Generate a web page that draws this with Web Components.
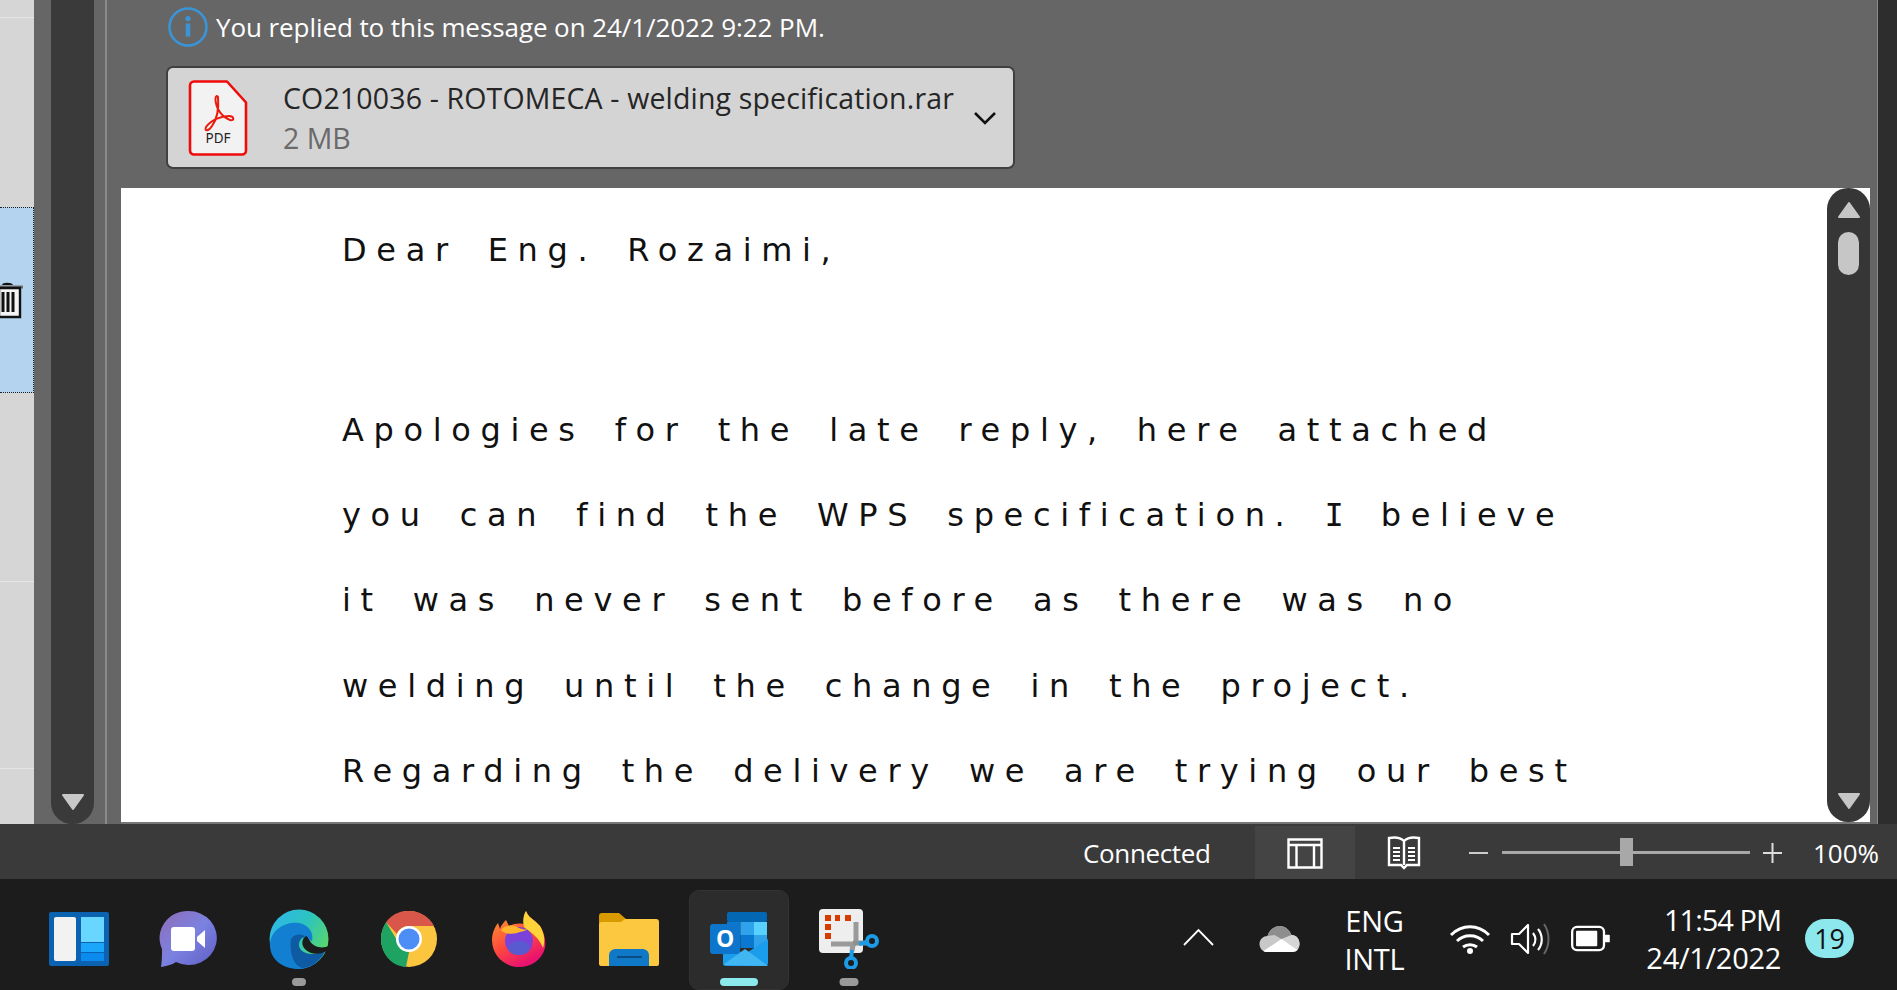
<!DOCTYPE html>
<html>
<head>
<meta charset="utf-8">
<style>
  html, body { margin: 0; height: 100%; overflow: hidden; background: #666; }
  body { font-family: "Open Sans", "Noto Sans", sans-serif; }
</style>
</head>
<body>
<app-screen>
  <reading-pane>
    <message-header slot="header"></message-header>
    <mail-body>
      <p>Dear Eng. Rozaimi,</p>
      <p class="gap"></p>
      <p>Apologies for the late reply, here attached</p>
      <p>you can find the WPS specification. <span style="font-family:'DejaVu Sans Mono',monospace;letter-spacing:7px">I</span> believe</p>
      <p>it was never sent before as there was no</p>
      <p>welding until the change in the project.</p>
      <p>Regarding the delivery we are trying our best</p>
    </mail-body>
  </reading-pane>
  <status-bar></status-bar>
  <win-taskbar></win-taskbar>
</app-screen>

<script>
class AppScreen extends HTMLElement {
  constructor() {
    super();
    this.attachShadow({ mode: "open" });
    this.shadowRoot.innerHTML = `
      <style>
        :host { display: grid; grid-template-rows: 824px 55px 111px; height: 990px; width: 1897px; }
      </style>
      <slot></slot>
    `;
  }
}

class ReadingPane extends HTMLElement {
  constructor() {
    super();
    this.attachShadow({ mode: "open" });
    this.shadowRoot.innerHTML = `
      <style>
        :host { display: flex; height: 824px; overflow: hidden; background: #666; }
        .folder { width: 34px; background: #d6d6d6; display: flex; flex-direction: column; flex: none; }
        .rule { height: 1px; background: #e6e6e6; flex: none; }
        .spacer { height: 189px; flex: none; }
        .selected { height: 186px; flex: none; background: #b3d3ee; border: 1px dotted #222; border-width: 1px 1px 1px 0; box-sizing: border-box; display: flex; align-items: center; overflow: hidden; }
        .gutter { width: 17px; flex: none; }
        .list-scroll { width: 43px; flex: none; background: #3a3a3a; border-radius: 0 0 21px 21px; display: flex; flex-direction: column; justify-content: flex-end; align-items: center; padding-bottom: 13px; box-sizing: border-box; }
        .pad { width: 11px; flex: none; }
        .line { width: 2px; flex: none; background: #8a8a8a; }
        .pad2 { width: 14px; flex: none; }
        .main { width: 1749px; flex: none; display: flex; flex-direction: column; }
        .right { flex: 1; background: #666; display: flex; }
        .right .thin { width: 7px; flex: none; }
        .right .l { width: 1px; flex: none; background: #8a8a8a; }
        .right .dark { flex: 1; background: #2d2d2d; }
      </style>
      <div class="folder">
        <div class="rule" style="margin-top:17px"></div>
        <div class="spacer"></div>
        <div class="selected">
          <svg width="24" height="38" viewBox="0 0 24 38" style="margin-left:-1px">
            <path d="M0 6h24" stroke="#707070" stroke-width="3"/>
            <path d="M3 4c0-3 10-3 11 0z" fill="#111"/>
            <path d="M0 7h21v29H0z" fill="#f4f4f4" stroke="#111" stroke-width="2.4"/>
            <path d="M4 11v20M9 11v20M14 11v20" stroke="#111" stroke-width="3"/>
          </svg>
        </div>
        <div class="rule" style="margin-top:188px"></div>
        <div class="rule" style="margin-top:186px"></div>
      </div>
      <div class="gutter"></div>
      <div class="list-scroll">
        <svg width="24" height="18" viewBox="0 0 24 18"><path d="M2 2h20L12 16z" fill="#c8c8c8" stroke="#c8c8c8" stroke-width="2" stroke-linejoin="round"/></svg>
      </div>
      <div class="pad"></div><div class="line"></div><div class="pad2"></div>
      <div class="main">
        <slot name="header"></slot>
        <slot></slot>
      </div>
      <div class="right"><div class="thin"></div><div class="l"></div><div class="dark"></div></div>
    `;
  }
}

class MessageHeader extends HTMLElement {
  constructor() {
    super();
    this.attachShadow({ mode: "open" });
    this.shadowRoot.innerHTML = `
      <style>
        :host { display: block; height: 188px; box-sizing: border-box; padding: 7px 0 0 45px; color: #fff; flex: none; }
        .info { display: flex; align-items: center; gap: 8px; height: 40px; margin-left: 2px; font-size: 26px; letter-spacing: -.08px; white-space: nowrap; }
        .card { margin-top: 19px; width: 849px; height: 103px; box-sizing: border-box; background: #d4d4d4; border: 2px solid #404040; border-radius: 7px; display: flex; align-items: center; padding-left: 20px; color: #262626; position: relative; }
        .name { font-size: 28.500px; letter-spacing: .15px; white-space: nowrap; line-height: 40px; }
        .size { font-size: 28.500px; color: #6a6a6a; line-height: 40px; }
        .text { margin-left: 35px; margin-top: 0; }
        .chev { position: absolute; left: 805px; top: 43px; }
      </style>
      <div class="info">
        <svg width="40" height="40" viewBox="0 0 40 40"><circle cx="20" cy="20" r="18.5" fill="none" stroke="#3a95d8" stroke-width="2.6"/><circle cx="20" cy="11.500" r="2.600" fill="#3a95d8"/><path d="M20 16.500v13" stroke="#3a95d8" stroke-width="4.500"/></svg>
        <span>You replied to this message on 24/1/2022 9:22 PM.</span>
      </div>
      <div class="card">
        <svg width="60" height="76" viewBox="0 0 60 76">
          <path d="M6 1.500h33l19 21v48a4 4 0 0 1-4 4H6a4 4 0 0 1-4-4v-65a4 4 0 0 1 4-4z" fill="#f2f2f2" stroke="#f00b0b" stroke-width="2.600" stroke-linejoin="round"/>
          <path d="M29 16c-3 1-1 9 1 13 3 6 7 9 12 11 5 1 4-4-1-4-8 0-18 4-23 11-2 5 3 4 6-1 5-7 7-18 6-29-.5-1-1-1-1-1z" fill="none" stroke="#ea1b0d" stroke-width="2"/>
          <text x="30" y="63" text-anchor="middle" font-size="15" font-family="Noto Sans, sans-serif" fill="#222" textLength="25" lengthAdjust="spacingAndGlyphs">PDF</text>
        </svg>
        <div class="text">
          <div class="name">CO210036 - ROTOMECA - welding specification.rar</div>
          <div class="size">2 MB</div>
        </div>
        <svg class="chev" width="24" height="14" viewBox="0 0 24 14"><path d="M2 2l10 10L22 2" fill="none" stroke="#111" stroke-width="2.600"/></svg>
      </div>
    `;
  }
}

class MailBody extends HTMLElement {
  constructor() {
    super();
    this.attachShadow({ mode: "open" });
    this.shadowRoot.innerHTML = `
      <style>
        :host { display: block; height: 636px; background: #fff; position: relative; overflow: hidden; padding: 44px 0 0 221px; box-sizing: border-box; border-bottom: 2px solid #777; }
        .scroll { position: absolute; right: 0; top: 0; bottom: 0; width: 43px; background: #363636; border-radius: 21px; display: flex; flex-direction: column; align-items: center; }
        .thumb { width: 21px; height: 43px; border-radius: 11px; background: #c6c6c6; margin-top: 13px; }
        .up { margin-top: 13px; }
        .down { margin-top: auto; margin-bottom: 12px; }
        ::slotted(p) { margin: 0 0 49.300px; height: 36px; line-height: 36px; font-family: "DejaVu Sans", sans-serif; font-size: 32px; letter-spacing: 9.650px; word-spacing: 10.200px; color: #111; white-space: pre; }
        ::slotted(p.gap) { height: 94.500px; margin: 0; }
      </style>
      <slot></slot>
      <div class="scroll">
        <svg class="up" width="24" height="18" viewBox="0 0 24 18"><path d="M12 2L2 16h20z" fill="#c6c6c6" stroke="#c6c6c6" stroke-width="2" stroke-linejoin="round"/></svg>
        <div class="thumb"></div>
        <svg class="down" width="24" height="18" viewBox="0 0 24 18"><path d="M2 2h20L12 16z" fill="#c6c6c6" stroke="#c6c6c6" stroke-width="2" stroke-linejoin="round"/></svg>
      </div>
    `;
  }
}

class StatusBar extends HTMLElement {
  constructor() {
    super();
    this.attachShadow({ mode: "open" });
    this.shadowRoot.innerHTML = `
      <style>
        :host { display: flex; align-items: stretch; height: 55px; background: #3a3a3a; color: #fff; font-size: 26px; letter-spacing: -.35px; padding: 2px 0 0 1083px; box-sizing: border-box; }
        .conn { width: 172px; display: flex; align-items: center; }
        .view { width: 100px; display: flex; align-items: center; justify-content: center; }
        .view.on { background: #444; }
        .zoom { display: flex; align-items: center; margin-left: 14px; }
        .track { position: relative; width: 248px; height: 3px; background: #a8a8a8; margin: 0 13px 0 14px; }
        .knob { position: absolute; left: 118px; top: -13px; width: 13px; height: 28px; background: #a8a8a8; }
        .pct { margin-left: 31px; letter-spacing: 0; }
      </style>
      <div class="conn">Connected</div>
      <div class="view on"><svg width="36" height="32" viewBox="0 0 36 32"><path d="M1.500 2.500h33v28h-33zM1.500 8h33M9.500 8v22.500M27 8v22.500" fill="none" stroke="#fff" stroke-width="2.400"/></svg></div>
      <div class="view"><svg width="34" height="36" viewBox="0 0 34 36" style="margin-left:-2px"><path d="M2 3c5-1 11-1 15 3 4-4 10-4 15-3v27H20l-3 3-3-3H2zM17 6v24" fill="none" stroke="#fff" stroke-width="2.400"/><path d="M6 13h7M6 17h7M6 21h7M6 25h7M21 13h7M21 17h7M21 21h7M21 25h7" fill="none" stroke="#fff" stroke-width="2"/></svg></div>
      <div class="zoom">
        <svg width="19" height="4" viewBox="0 0 19 4"><path d="M0 2h19" stroke="#ccc" stroke-width="2"/></svg>
        <div class="track"><div class="knob"></div></div>
        <svg width="19" height="20" viewBox="0 0 19 20"><path d="M0 10h19M9.500 0v20" stroke="#ddd" stroke-width="2"/></svg>
        <div class="pct">100%</div>
      </div>
    `;
  }
}

// taskbar app icons, sized from the reference
const APP_ICONS = {
  widgets: `<svg width="60" height="54" viewBox="0 0 60 54"><rect width="60" height="54" rx="2" fill="#0a62b0"/><rect x="5" y="5" width="22" height="44" rx="2" fill="#f2f2f2"/><rect x="32" y="5" width="23" height="25" fill="#68d6ff"/><rect x="32" y="31" width="23" height="9" fill="#1aa6fb"/><rect x="32" y="41" width="23" height="8" fill="#0b8bee"/></svg>`,
  teams: `<svg width="58" height="58" viewBox="0 0 58 58" style="margin-left:-2px"><defs><linearGradient id="t" x1="0" y1="0" x2="1" y2="1"><stop offset="0" stop-color="#8f6cb8"/><stop offset=".5" stop-color="#7b82e0"/><stop offset="1" stop-color="#5f5cc4"/></linearGradient></defs><path d="M29 1a28 27 0 1 1-12 51c-4 3-10 4-15 5 1-7 1-12 1-18A28 27 0 0 1 29 1z" fill="url(#t)"/><rect x="12" y="17" width="24" height="24" rx="3" fill="#fff"/><path d="M38 27l8-7v18l-8-7z" fill="#fff"/></svg>`,
  edge: `<svg width="60" height="60" viewBox="0 0 60 60"><defs><linearGradient id="e" x1="0" y1="0" x2="1" y2=".6"><stop offset="0" stop-color="#2fb5f0"/><stop offset=".55" stop-color="#2cc4bf"/><stop offset="1" stop-color="#5ad66a"/></linearGradient></defs><circle cx="30" cy="30" r="29.500" fill="url(#e)"/><path d="M1 36C1 20 18 12 30 14C40 16 45 24 43 32C36 28 27 27 24 36C22 44 30 52 40 52C46 52 52 48 56 42C52 52 42 60 30 60C13 60 1 50 1 36Z" fill="#127fd0"/><path d="M22 30C26 24 32 25 36 27C30 30 28 36 32 41C38 47 50 46 57 40C53 50 44 58 34 59C26 58 20 46 22 30Z" fill="#0e5ba3"/><path d="M37 27C31 31 32 40 42 44C48 46 54 44 60 41V37C53 40 44 38 41 32C39 29 38 27 37 27Z" fill="#1c1c1c"/></svg>`,
  chrome: `<svg width="56" height="56" viewBox="0 0 56 56"><circle cx="28" cy="28" r="28" fill="#fbc53f"/><path d="M28 0a28 28 0 0 1 25 15H28a13 13 0 0 0-12 8L5 11A28 28 0 0 1 28 0z" fill="#d8574a"/><path d="M5 11l12 20a13 13 0 0 0 11 10l-3 15C10 55 0 42 0 28 0 21 2 16 5 11z" fill="#1ea362"/><circle cx="28" cy="28" r="13" fill="#fff"/><circle cx="28" cy="28" r="10.500" fill="#4c8df6"/></svg>`,
  firefox: `<svg width="54" height="56" viewBox="0 0 54 56"><defs><linearGradient id="f" x1="0" y1="0" x2=".5" y2="1"><stop offset="0" stop-color="#ffa02c"/><stop offset=".6" stop-color="#ff4a3e"/><stop offset="1" stop-color="#e8126f"/></linearGradient></defs><path d="M34 0c2 6 7 8 11 12l3 3c5 8 6 16 5 22-3 12-14 19-26 19C12 56 0 44 0 29c0-7 3-13 6-17l2 6c1-4 5-8 6-9l3 6c5-3 12-3 15-2 0-5 0-9 2-13z" fill="url(#f)"/><path d="M34 0c2 6 7 8 11 12l3 3c5 8 5 16 3 22-4-10-10-14-18-20-2-2-3-11 1-17z" fill="#ffd43b"/><circle cx="27" cy="30" r="14" fill="#7a42d8"/><ellipse cx="27" cy="37" rx="11" ry="7" fill="#5a5ad0"/><path d="M9 19c3-4 10-6 16-3 4 2 8 3 11 2-4 3-10 3-11 4-8 2-14 0-16-3z" fill="#ffb52c"/></svg>`,
  files: `<svg width="60" height="53" viewBox="0 0 60 53"><path d="M0 3a3 3 0 0 1 3-3h17l7 6v8H0z" fill="#d99a00"/><path d="M0 12c0-2 1-3 3-3l19 0 4-3h31a3 3 0 0 1 3 3v42a2 2 0 0 1-2 2H2a2 2 0 0 1-2-2z" fill="#fbc83f"/><path d="M10 53V43c0-5 3-7 7-7h26c4 0 7 2 7 7v10z" fill="#0f79c7"/><path d="M18 44h25" stroke="#0a4d86" stroke-width="2"/></svg>`,
  outlook: `<svg width="58" height="54" viewBox="0 0 58 54"><rect x="17" y="0" width="40" height="10" rx="2" fill="#0367b4"/><rect x="17" y="10" width="13.500" height="13" fill="#0a78d0"/><rect x="30.500" y="10" width="13.500" height="13" fill="#2ea3ec"/><rect x="44" y="10" width="13" height="13" fill="#59d1ff"/><rect x="17" y="23" width="13.500" height="13" fill="#0367b4"/><rect x="30.500" y="23" width="13.500" height="13" fill="#0a78d0"/><rect x="44" y="23" width="13" height="13" fill="#2ea3ec"/><path d="M13 31l22 11 23-15v24a3 3 0 0 1-3 3H16a3 3 0 0 1-3-3z" fill="#1b9ded"/><path d="M13 53l22-16 23 17z" fill="#40b6f2"/><rect x="0" y="12" width="30" height="30" rx="3" fill="#0d76cc"/><text x="15" y="35" text-anchor="middle" font-size="23" font-weight="700" font-family="Open Sans, sans-serif" fill="#fff">O</text></svg>`,
  snip: `<svg width="60" height="60" viewBox="0 0 60 60"><rect x="0" y="0" width="44" height="44" rx="4" fill="#eeeeee"/><path d="M6 6h6v6H6zM16 6h5v6h-5zM26 6h6v6h-6zM6 15h6v6H6zM6 24h6v6H6z" fill="#d83b01"/><path d="M12 35h22a3 3 0 0 0 3-3V13" fill="none" stroke="#9a9a9a" stroke-width="5"/><path d="M34 34h14" stroke="#909090" stroke-width="5" fill="none"/><path d="M34 36l-1 6" stroke="#9a9a9a" stroke-width="5" fill="none"/><circle cx="53" cy="32" r="5" fill="none" stroke="#1c9be6" stroke-width="4"/><circle cx="32" cy="54" r="5" fill="none" stroke="#1c9be6" stroke-width="4"/><path d="M40 35l9-2M33 41l-1 9" stroke="#1c9be6" stroke-width="4"/></svg>`
};

class TaskbarApp extends HTMLElement {
  constructor() {
    super();
    this.attachShadow({ mode: "open" });
  }
  connectedCallback() {
    const state = this.getAttribute("state") || "";
    this.shadowRoot.innerHTML = `
      <style>
        :host { display: flex; width: 110px; height: 111px; align-items: center; justify-content: center; position: relative; flex: none; padding-top: 9px; box-sizing: border-box; }
        .pill { position: absolute; left: 50%; bottom: 4px; transform: translateX(-50%); width: 14px; height: 8px; border-radius: 4px; background: #9a9a9a; display: none; }
        .running .pill { display: block; }
        .wide .pill { width: 19px; }
        .active .pill { display: block; width: 38px; background: #8ceaec; }
        .bg { display: none; position: absolute; left: 5px; right: 5px; top: 11px; bottom: 0; border-radius: 10px; background: #2c2c2c; border: 1px solid #333; box-sizing: border-box; }
        .active .bg { display: block; }
        .w { display: contents; }
        svg { position: relative; display: block; }
      </style>
      <div class="w ${state}">
        <div class="bg"></div>
        ${APP_ICONS[this.getAttribute("icon")]}
        <div class="pill"></div>
      </div>
    `;
  }
}

class WinTaskbar extends HTMLElement {
  constructor() {
    super();
    this.attachShadow({ mode: "open" });
    this.shadowRoot.innerHTML = `
      <style>
        :host { display: flex; height: 111px; background: #1c1c1c; color: #fff; align-items: center; padding-left: 24px; box-sizing: border-box; font-size: 29px; letter-spacing: -.3px; }
        .apps { display: flex; }
        .tray { margin-left: auto; display: flex; align-items: center; height: 100%; padding: 0 43px 0 0; }
        .lang { text-align: center; line-height: 38.500px; margin: 0 45px 0 45px; padding-top: 11px; }
        .clock { text-align: right; line-height: 38.500px; margin-left: 35px; padding-top: 9px; }
        .clock span { letter-spacing: -1px; }
        .badge { width: 49px; height: 39px; margin: 8px 0 0 24px; border-radius: 20px; background: #8ce8ec; color: #111; display: flex; align-items: center; justify-content: center; font-size: 27px; }
        svg { display: block; flex: none; margin-top: 8px; }
      </style>
      <div class="apps">
        <taskbar-app icon="widgets"></taskbar-app>
        <taskbar-app icon="teams"></taskbar-app>
        <taskbar-app icon="edge" state="running"></taskbar-app>
        <taskbar-app icon="chrome"></taskbar-app>
        <taskbar-app icon="firefox"></taskbar-app>
        <taskbar-app icon="files"></taskbar-app>
        <taskbar-app icon="outlook" state="active"></taskbar-app>
        <taskbar-app icon="snip" state="running wide"></taskbar-app>
      </div>
      <div class="tray">
        <svg width="31" height="18" viewBox="0 0 31 18" style="margin:4px 45px 0 0"><path d="M1 17L15.500 2 30 17" fill="none" stroke="#fff" stroke-width="1.800"/></svg>
        <svg width="41" height="26" viewBox="0 0 40 26"><path d="M8 26C2 26 0 21 0 18C0 13 4 10 8 10C10 3 16 0 20 0C26 0 30 4 32 9C37 9 40 13 40 18C40 22 37 26 33 26Z" fill="#c8c8c8"/><path d="M8 10C10 3 16 0 20 0C26 0 30 4 32 9L30 12 22 13 15 9Z" fill="#8e8e8e"/><path d="M22 13L32 9C37 9 40 13 40 18C40 20 39 22 38 24Z" fill="#d6d6d6"/><path d="M4 25L22 13 38 24C37 25 35 26 33 26H8C6 26 5 26 4 25Z" fill="#fff"/></svg>
        <div class="lang">ENG<br>INTL</div>
        <svg width="42" height="30" viewBox="0 0 42 30" style="margin-right:19px"><path d="M2 11c11-11 27-11 38 0M8 17c7-7 19-7 26 0M14 23c4-3 10-3 14 0" fill="none" stroke="#fff" stroke-width="3"/><circle cx="21" cy="27" r="3" fill="#fff"/></svg>
        <svg width="40" height="34" viewBox="0 0 40 34" style="margin-right:20px"><path d="M2 12h7l9-9v28l-9-9H2z" fill="none" stroke="#fff" stroke-width="2.200" stroke-linejoin="round"/><path d="M23 11c3 4 3 9 0 13M28 7c5 6 5 15 0 21" fill="none" stroke="#fff" stroke-width="2.200"/><path d="M34 2c6 9 6 21 0 30" fill="none" stroke="#666" stroke-width="2"/></svg>
        <svg width="41" height="27" viewBox="0 0 42 28"><rect x="2" y="2" width="33" height="24" rx="5" fill="none" stroke="#fff" stroke-width="2.400"/><rect x="6" y="6" width="22" height="16" rx="1" fill="#fff"/><rect x="36" y="10" width="5" height="8" rx="1" fill="#fff"/></svg>
        <div class="clock"><span>11:54 PM</span><br>24/1/2022</div>
        <div class="badge">19</div>
      </div>
    `;
  }
}

customElements.define("app-screen", AppScreen);
customElements.define("reading-pane", ReadingPane);
customElements.define("message-header", MessageHeader);
customElements.define("mail-body", MailBody);
customElements.define("status-bar", StatusBar);
customElements.define("taskbar-app", TaskbarApp);
customElements.define("win-taskbar", WinTaskbar);
</script>
</body>
</html>
